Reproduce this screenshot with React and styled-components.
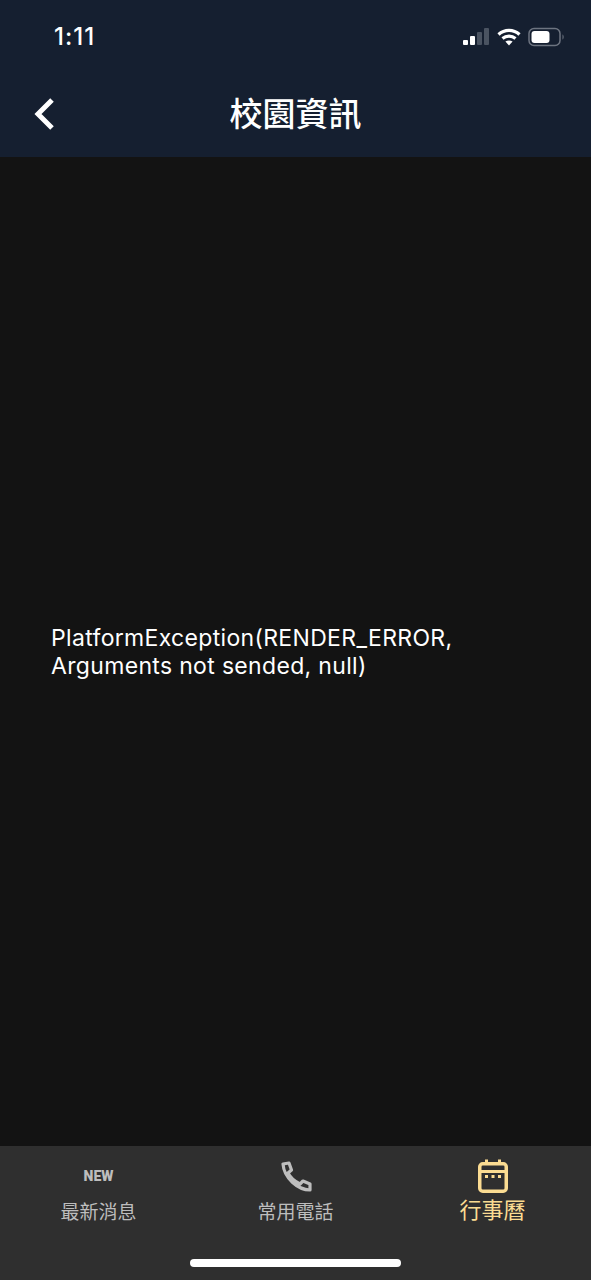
import React from "react"
import styled, { createGlobalStyle } from "styled-components"

const GlobalStyle = createGlobalStyle`
  html, body {
    margin: 0;
    padding: 0;
    background: #131313;
  }
  * {
    box-sizing: border-box;
  }
`

const cjk = `Inter, "Noto Sans CJK TC", sans-serif`

const Page = styled.div`
  width: 591px;
  height: 1280px;
  display: flex;
  flex-direction: column;
  overflow: hidden;
  font-family: ${cjk};
  color: #fff;
`

const Header = styled.header`
  height: 157px;
  flex: none;
  background: #151f30;
  display: flex;
  flex-direction: column;
`

const StatusBar = styled.div`
  height: 73px;
  padding: 0 26px 0 54px;
  display: flex;
  align-items: center;
  justify-content: space-between;
`

const Time = styled.span`
  font-size: 24px;
  font-weight: 500;
  letter-spacing: 1px;
`

const StatusIcons = styled.div`
  display: flex;
  align-items: center;
  gap: 7px;
`

const NavBar = styled.div`
  flex: 1;
  display: grid;
  grid-template-columns: 1fr auto 1fr;
  align-items: center;
  padding: 0 33px 2px;
`

const BackButton = styled.button`
  width: 24px;
  height: 34px;
  padding: 0;
  border: 0;
  background: none;
  display: flex;
`

const Title = styled.h1`
  margin: 0;
  font-size: 33px;
  line-height: 40px;
  font-weight: 500;
`

const Content = styled.main`
  flex: 1;
  background: #131313;
  display: flex;
  align-items: center;
  padding: 0 51px;
`

const ErrorText = styled.p`
  margin: 0;
  font-size: 23px;
  line-height: 28px;
  letter-spacing: 0.33px;
  color: #fff;
`

const TabBar = styled.nav`
  height: 134px;
  flex: none;
  background: #2f2f2f;
  position: relative;
  display: grid;
  grid-template-columns: repeat(3, 1fr);
  padding-top: 10px;
`

const Tab = styled.div`
  display: flex;
  flex-direction: column;
  align-items: center;
  height: 76px;
  color: ${(props) => (props.$active ? "#fbdc92" : "#bdbdbd")};
`

const TabIcon = styled.div`
  height: 40px;
  display: flex;
  align-items: center;
  justify-content: center;
`

const NewMark = styled.span`
  font-family: Roboto, sans-serif;
  font-size: 14px;
  font-weight: 900;
  letter-spacing: 0;
`

const TabLabel = styled.span`
  font-size: ${(props) => (props.$active ? "22px" : "19px")};
  line-height: 28px;
  margin-top: ${(props) => (props.$active ? "0" : "3px")};
`

const HomeIndicator = styled.div`
  position: absolute;
  left: 190px;
  bottom: 13px;
  width: 211px;
  height: 8px;
  border-radius: 4px;
  background: #fff;
`

const SignalIcon = () => (
  <svg width="30" height="20" viewBox="0 0 30 20" fill="none">
    <rect x="3" y="13" width="5" height="5" rx="1" fill="#fff" />
    <rect x="10" y="9" width="5" height="9" rx="1" fill="#fff" />
    <rect x="17" y="5" width="5" height="13" rx="1" fill="#4a5361" />
    <rect x="24" y="1" width="5" height="17" rx="1" fill="#4a5361" />
  </svg>
)

const WifiIcon = () => (
  <svg width="24" height="18" viewBox="0 0 24 18" fill="none">
    <path d="M1.5 6.5C7.5 1 16.5 1 22.5 6.5" stroke="#fff" strokeWidth="3.2" />
    <path d="M5.5 10.5C9.2 7.4 14.8 7.4 18.5 10.5" stroke="#fff" strokeWidth="3.2" />
    <path d="M12 17.5L8.4 13.6C10.5 12 13.5 12 15.6 13.6Z" fill="#fff" />
  </svg>
)

const BatteryIcon = () => (
  <svg width="37" height="20" viewBox="0 0 37 20" fill="none">
    <rect x="1" y="1.5" width="31" height="17" rx="5" stroke="#6d7480" strokeWidth="1.5" />
    <rect x="3.5" y="4" width="18" height="12" rx="3" fill="#fff" />
    <path d="M34.5 7.5C36 8 36 12 34.5 12.5Z" fill="#6d7480" />
  </svg>
)

const BackIcon = () => (
  <svg width="24" height="34" viewBox="0 0 24 34" fill="none">
    <path d="M19 3L5 17L19 31" stroke="#fff" strokeWidth="5" />
  </svg>
)

const PhoneIcon = () => (
  <svg width="32" height="32" viewBox="0 0 32 32" fill="none">
    <path
      d="M3 4L9 3L11.5 10L8 13C10 17 15 21.5 20 24L23 21L30 24V30C18 30 4 18 3 4Z"
      stroke="currentColor"
      strokeWidth="3.2"
      strokeLinejoin="round"
    />
  </svg>
)

const CalendarIcon = () => (
  <svg width="30" height="34" viewBox="0 0 30 34" fill="none">
    <rect x="1.75" y="4.75" width="26.5" height="27.5" rx="3" stroke="currentColor" strokeWidth="3.5" />
    <path d="M2 12.5H28" stroke="currentColor" strokeWidth="3" />
    <path d="M8.5 0.5V5M21.5 0.5V5" stroke="currentColor" strokeWidth="3" />
    <path d="M7 17.5H10M13.5 17.5H16.5M20 17.5H23" stroke="currentColor" strokeWidth="3" />
  </svg>
)

const App = () => {
  return (
    <Page>
      <GlobalStyle />
      <Header>
        <StatusBar>
          <Time>1:11</Time>
          <StatusIcons>
            <SignalIcon />
            <WifiIcon />
            <BatteryIcon />
          </StatusIcons>
        </StatusBar>
        <NavBar>
          <BackButton aria-label="back">
            <BackIcon />
          </BackButton>
          <Title>校園資訊</Title>
        </NavBar>
      </Header>
      <Content>
        <ErrorText>
          PlatformException(RENDER_ERROR,
          <br />
          Arguments not sended, null)
        </ErrorText>
      </Content>
      <TabBar>
        <Tab>
          <TabIcon>
            <NewMark>NEW</NewMark>
          </TabIcon>
          <TabLabel>最新消息</TabLabel>
        </Tab>
        <Tab>
          <TabIcon>
            <PhoneIcon />
          </TabIcon>
          <TabLabel>常用電話</TabLabel>
        </Tab>
        <Tab $active>
          <TabIcon>
            <CalendarIcon />
          </TabIcon>
          <TabLabel $active>行事曆</TabLabel>
        </Tab>
        <HomeIndicator />
      </TabBar>
    </Page>
  )
}

export default App
